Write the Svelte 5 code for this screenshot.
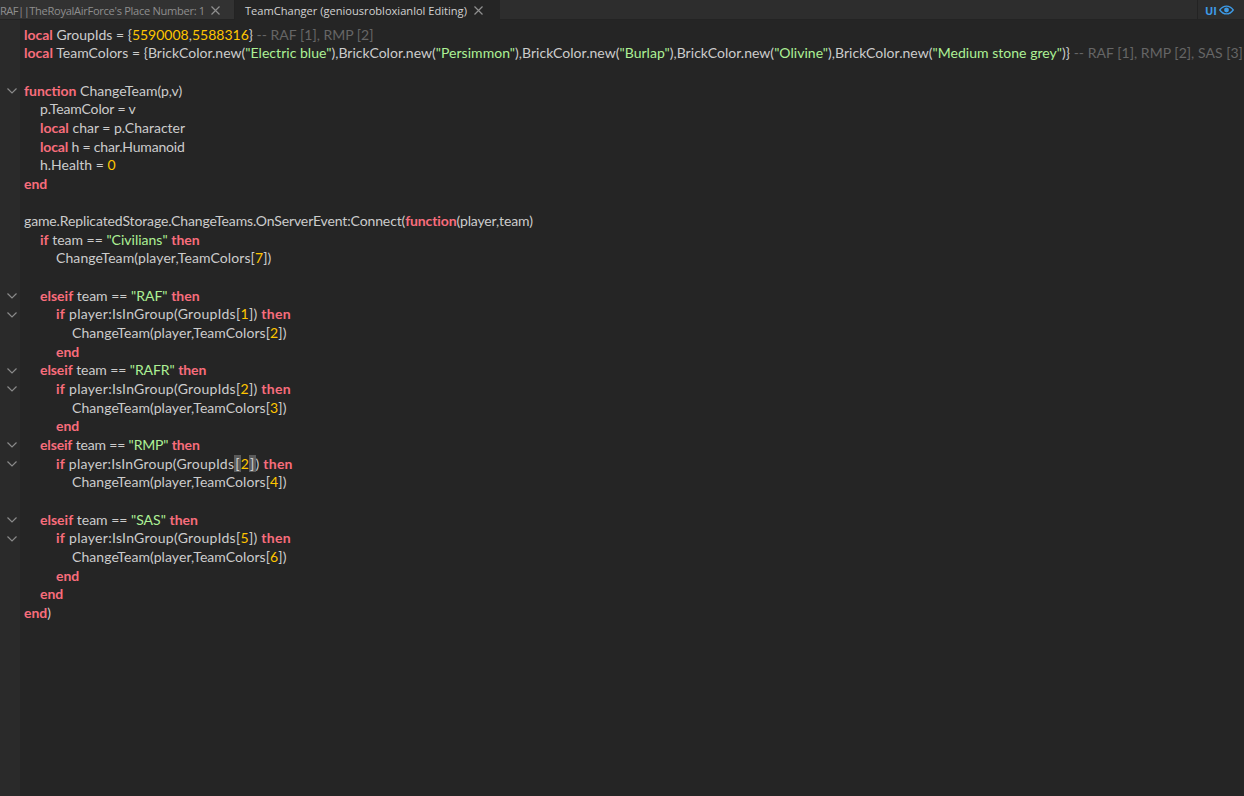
<script>
  /** Script editor view: tab strip, fold gutter and highlighted Lua source. */

  const source = `local GroupIds = {5590008,5588316} -- RAF [1], RMP [2]
local TeamColors = {BrickColor.new("Electric blue"),BrickColor.new("Persimmon"),BrickColor.new("Burlap"),BrickColor.new("Olivine"),BrickColor.new("Medium stone grey")} -- RAF [1], RMP [2], SAS [3]

function ChangeTeam(p,v)
    p.TeamColor = v
    local char = p.Character
    local h = char.Humanoid
    h.Health = 0
end

game.ReplicatedStorage.ChangeTeams.OnServerEvent:Connect(function(player,team)
    if team == "Civilians" then
        ChangeTeam(player,TeamColors[7])

    elseif team == "RAF" then
        if player:IsInGroup(GroupIds[1]) then
            ChangeTeam(player,TeamColors[2])
        end
    elseif team == "RAFR" then
        if player:IsInGroup(GroupIds[2]) then
            ChangeTeam(player,TeamColors[3])
        end
    elseif team == "RMP" then
        if player:IsInGroup(GroupIds[2]) then
            ChangeTeam(player,TeamColors[4])

    elseif team == "SAS" then
        if player:IsInGroup(GroupIds[5]) then
            ChangeTeam(player,TeamColors[6])
        end
    end
end)`;

  const foldLines = [3, 14, 15, 18, 19, 22, 23, 26, 27];
  const matchedBracketLine = 23;

  // the original editor font runs wider or narrower than ours depending on the letters
  const tracking = {
    1: 0.03, 4: -0.15, 6: -0.17, 10: -0.13,
    12: 0.1, 15: 0.28, 16: 0.07, 18: -0.08, 19: 0.28, 20: 0.07,
    22: -0.16, 23: 0.22, 24: 0.07, 27: 0.28, 28: 0.07,
  };

  const tokenPattern = /(--.*$)|("[^"]*")|\b(local|function|end|if|elseif|then)\b|(\d+)|([\[\]])|(.)/g;

  function tokenize(line) {
    const tokens = [];
    for (const m of line.matchAll(tokenPattern)) {
      let kind = "plain";
      if (m[1]) kind = "comment";
      else if (m[2]) kind = "string";
      else if (m[3]) kind = "keyword";
      else if (m[4]) kind = "number";
      else if (m[5]) kind = "bracket";
      const last = tokens[tokens.length - 1];
      if (kind === "plain" && last?.kind === "plain") last.text += m[0];
      else tokens.push({ kind, text: m[0] });
    }
    return tokens;
  }

  const lines = source.split("\n").map((text, i) => ({
    indent: text.match(/^ */)[0].length / 4,
    tokens: tokenize(text.trimStart()),
    fold: foldLines.includes(i),
    matched: i === matchedBracketLine,
    tracking: tracking[i] ?? 0,
  }));
</script>

<div class="editor">
  <div class="tabbar">
    <div class="tab">
      <span class="tab-title"><span class="pipes">RAF||</span>TheRoyalAirForce's Place Number: 1</span>
      <svg class="close" viewBox="0 0 9 9"><path d="M0.5 0.5 8.5 8.5M8.5 0.5 0.5 8.5" /></svg>
    </div>
    <div class="tab active">
      <span class="tab-title">TeamChanger (geniousrobloxianlol Editing)</span>
      <svg class="close" viewBox="0 0 9 9"><path d="M0.5 0.5 8.5 8.5M8.5 0.5 0.5 8.5" /></svg>
    </div>
    <div class="spacer"></div>
    <div class="ui-toggle">
      <span>UI</span>
      <svg viewBox="0 0 16 10" width="15" height="10">
        <path d="M0.8 5C3 2 5.4 0.8 8 0.8S13 2 15.2 5C13 8 10.6 9.2 8 9.2S3 8 0.8 5Z" />
        <circle cx="8" cy="5" r="2.6" />
      </svg>
    </div>
  </div>

  <div class="body">
    <div class="gutter">
      {#each lines as line}
        <div class="fold-row">
          {#if line.fold}
            <svg viewBox="0 0 10 6" width="10" height="6"><path d="M0.5 0.5 5 5 9.5 0.5" /></svg>
          {/if}
        </div>
      {/each}
    </div>
    <div class="code">
      {#each lines as line}
        <div
          class="code-line"
          class:matched={line.matched}
          style:padding-left="{line.indent * 16}px"
          style:letter-spacing="{line.tracking}px"
        >
          {#each line.tokens as token}<span class={token.kind}>{token.text}</span>{/each}
        </div>
      {/each}
    </div>
  </div>
</div>

<style>
  :global(body) {
    margin: 0;
    background: #252525;
  }
  .editor {
    width: 1244px;
    height: 796px;
    display: flex;
    flex-direction: column;
    overflow: hidden;
    background: #252525;
  }
  .tabbar {
    flex: none;
    height: 20px;
    display: flex;
    background: #2d2d2d;
    box-shadow: inset 0 -1px 0 #232323;
    font-family: "Open Sans", "Noto Sans", sans-serif;
    font-size: 11.1px;
  }
  .tab {
    width: 235px;
    display: flex;
    align-items: center;
    gap: 6px;
    color: #8e8e8e;
    white-space: nowrap;
    box-sizing: border-box;
    border-right: 1px solid #232323;
    background: #323232;
    box-shadow: inset 0 -1px 0 #232323;
    letter-spacing: -0.3px;
  }
  .pipes {
    letter-spacing: -0.5px;
  }
  .tab.active {
    width: 265px;
    padding-left: 10px;
    gap: 7px;
    background: #252525;
    color: #d2d2d2;
    border-right: none;
    box-shadow: none;
    letter-spacing: 0;
  }
  .close {
    flex: none;
    width: 9px;
    height: 9px;
  }
  .close path {
    stroke: #8f8f8f;
    stroke-width: 1.2;
    fill: none;
  }
  .spacer {
    flex: 1;
  }
  .ui-toggle {
    width: 47px;
    display: flex;
    align-items: center;
    gap: 2px;
    padding-left: 7px;
    box-sizing: border-box;
    border-left: 1px solid #232323;
    color: #3d9ae6;
    font-weight: 700;
    font-size: 11px;
  }
  .ui-toggle path {
    fill: none;
    stroke: #3d9ae6;
    stroke-width: 1.4;
  }
  .ui-toggle circle {
    fill: #3d9ae6;
  }
  .body {
    flex: 1;
    display: flex;
    min-height: 0;
  }
  .gutter {
    flex: none;
    width: 20px;
    box-sizing: border-box;
    padding: 5.6px 0 0 7px;
    background: #2a2a2a;
  }
  .fold-row {
    height: 18.66px;
    display: flex;
    align-items: center;
  }
  .fold-row path {
    fill: none;
    stroke: #8a8a8a;
    stroke-width: 1.2;
  }
  .code {
    flex: 1;
    min-width: 0;
    padding: 5.6px 0 0 4px;
    font-family: "Lato", "Open Sans", sans-serif;
    font-size: 14px;
    color: #cccccc;
    white-space: pre;
    overflow: hidden;
  }
  .code-line {
    height: 18.66px;
    line-height: 18.66px;
  }
  .keyword {
    color: #f86d7c;
    font-weight: 700;
  }
  .number {
    color: #ffc600;
  }
  .string {
    color: #adf195;
  }
  .comment {
    color: #666666;
  }
  .matched .bracket {
    padding: 0 1px;
    background: #5a5a5a;
  }
</style>
